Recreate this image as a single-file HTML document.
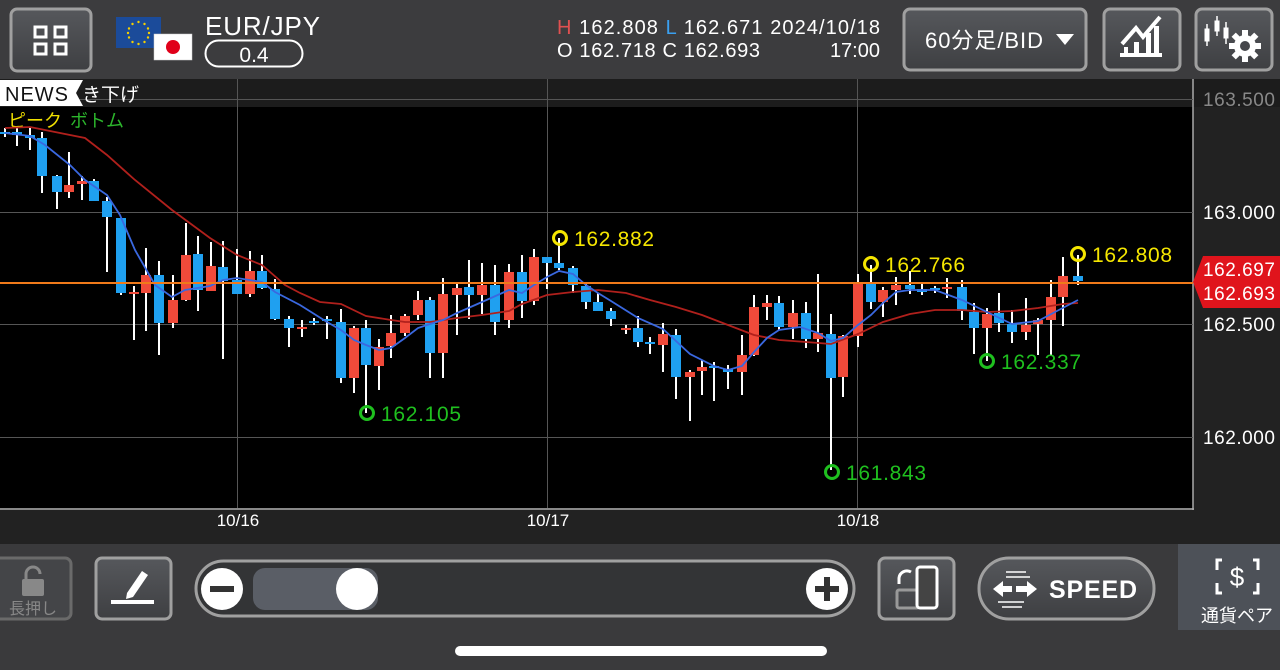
<!DOCTYPE html>
<html><head><meta charset="utf-8"><style>
html,body{margin:0;padding:0;background:#3a3a3c;width:1280px;height:670px;overflow:hidden}
svg{display:block}
text{font-family:"Liberation Sans","Noto Sans CJK JP",sans-serif}
</style></head><body>
<svg id="s" width="1280" height="670" viewBox="0 0 1280 670" xmlns="http://www.w3.org/2000/svg">
<defs>
<linearGradient id="bg1" x1="0" y1="0" x2="0" y2="1"><stop offset="0" stop-color="#56585c"/><stop offset="1" stop-color="#3e3f42"/></linearGradient>
</defs>
<rect x="0" y="0" width="1280" height="79" fill="#3c3c3e"/>
<rect x="0" y="79" width="1280" height="28" fill="#1c1c1c"/>
<rect x="0" y="107" width="1193" height="401" fill="#000"/>
<rect x="1193" y="107" width="87" height="401" fill="#222"/>
<rect x="0" y="508" width="1280" height="36" fill="#222"/>
<rect x="0" y="544" width="1280" height="126" fill="#3a3a3c"/>
<line x1="1193" y1="79" x2="1193" y2="510" stroke="#aaa" stroke-width="1.5"/>
<line x1="0" y1="509" x2="1194" y2="509" stroke="#aaa" stroke-width="1.5"/>

<g stroke="#555" stroke-width="1">
<line x1="0" y1="99.5" x2="1193" y2="99.5"/>
<line x1="0" y1="212.5" x2="1193" y2="212.5"/>
<line x1="0" y1="324.5" x2="1193" y2="324.5"/>
<line x1="0" y1="437.5" x2="1193" y2="437.5"/>
<line x1="237.5" y1="79" x2="237.5" y2="508"/>
<line x1="547.5" y1="79" x2="547.5" y2="508"/>
<line x1="857.5" y1="79" x2="857.5" y2="508"/>
</g>

<rect x="11" y="9" width="80" height="62" rx="6" fill="url(#bg1)" stroke="#a0a0a0" stroke-width="3"/>
<g fill="none" stroke="#fff" stroke-width="3">
<rect x="35" y="27" width="11" height="10"/><rect x="55" y="27" width="11" height="10"/>
<rect x="35" y="44" width="11" height="10"/><rect x="55" y="44" width="11" height="10"/>
</g>
<rect x="116" y="17" width="45" height="31" fill="#1b4b9a"/>
<g fill="#f5d000"><circle cx="138.5" cy="22" r="1.2"/><circle cx="144.5" cy="24" r="1.2"/><circle cx="148" cy="28.5" r="1.2"/><circle cx="149" cy="33" r="1.2"/><circle cx="148" cy="37.5" r="1.2"/><circle cx="144.5" cy="42" r="1.2"/><circle cx="138.5" cy="44" r="1.2"/><circle cx="132.5" cy="42" r="1.2"/><circle cx="129" cy="37.5" r="1.2"/><circle cx="128" cy="33" r="1.2"/><circle cx="129" cy="28.5" r="1.2"/><circle cx="132.5" cy="24" r="1.2"/></g>
<rect x="154" y="34" width="38" height="26" fill="#fff" stroke="#ccc" stroke-width="0.5"/>
<circle cx="173" cy="47" r="7" fill="#e0001a"/>
<text x="205" y="35" font-size="26" fill="#fff" textLength="115">EUR/JPY</text>
<rect x="205.5" y="40.5" width="97" height="26" rx="13" fill="none" stroke="#fff" stroke-width="2"/>
<text x="254" y="62" font-size="21" fill="#fff" text-anchor="middle">0.4</text>

<g font-size="20" fill="#fff">
<text x="557" y="34" textLength="323"><tspan fill="#e05050">H</tspan> 162.808 <tspan fill="#3aa0f0">L</tspan> 162.671 2024/10/18</text>
<text x="557" y="57" textLength="203">O 162.718 C 162.693</text>
<text x="880" y="57" text-anchor="end">17:00</text>
</g>
<rect x="904" y="9" width="182" height="61" rx="6" fill="url(#bg1)" stroke="#a0a0a0" stroke-width="3"/>
<text x="925" y="48" font-size="22" fill="#fff" textLength="118">60分足/BID</text>
<path d="M1056 34 L1074 34 L1065 45 Z" fill="#fff"/>
<rect x="1104" y="9" width="76" height="61" rx="6" fill="url(#bg1)" stroke="#a0a0a0" stroke-width="3"/>
<path d="M1122 44 L1136 28 L1143 37 L1160 17" stroke="#fff" stroke-width="4" fill="none"/>
<rect x="1124" y="47" width="4" height="8" fill="#fff"/><rect x="1134" y="42" width="5" height="13" fill="#fff"/><rect x="1146" y="33" width="5" height="22" fill="#fff"/><rect x="1154" y="26" width="5" height="29" fill="#fff"/>
<rect x="1120" y="53" width="42" height="4" fill="#fff"/>
<rect x="1196" y="9" width="76" height="61" rx="6" fill="url(#bg1)" stroke="#a0a0a0" stroke-width="3"/>
<g fill="#fff" stroke="#fff"><line x1="1207" y1="24" x2="1207" y2="46" stroke-width="1.5"/><rect x="1205" y="29" width="4" height="12"/>
<line x1="1217" y1="16" x2="1217" y2="36" stroke-width="1.5"/><rect x="1215" y="21" width="4" height="10"/>
<line x1="1226" y1="22" x2="1226" y2="44" stroke-width="1.5"/><rect x="1224" y="28" width="4" height="10"/></g>
<g transform="translate(1245,46)"><circle r="11" fill="#fff"/>
<g fill="#fff"><rect x="-3" y="-16" width="6" height="32"/><rect x="-3" y="-16" width="6" height="32" transform="rotate(45)"/><rect x="-3" y="-16" width="6" height="32" transform="rotate(90)"/><rect x="-3" y="-16" width="6" height="32" transform="rotate(135)"/></g>
<circle r="5" fill="#45464a"/></g>

<path d="M0 80 L83 80 L76 93 L83 106 L0 106 Z" fill="#fff"/>
<text x="5" y="101" font-size="20" fill="#111" textLength="63">NEWS</text>
<text x="82" y="101" font-size="19" fill="#fff">き下げ</text>
<text x="8" y="127" font-size="18" fill="#f0e000">ピーク</text>
<text x="70" y="127" font-size="18" fill="#2cb52c">ボトム</text>

<g id="candles"></g>

<line x1="0" y1="283" x2="1193" y2="283" stroke="#f07a1a" stroke-width="2"/>
<path d="M1193 282 L1203 256 L1280 256 L1280 308 L1203 308 Z" fill="#e0141c"/>
<g font-size="19" fill="#fff"><text x="1203" y="276" textLength="72">162.697</text><text x="1203" y="300" textLength="72">162.693</text></g>
<g font-size="19" fill="#fff"><text x="1203" y="106" fill="#888" textLength="72">163.500</text><text x="1203" y="219" textLength="72">163.000</text><text x="1203" y="331" textLength="72">162.500</text><text x="1203" y="444" textLength="72">162.000</text></g>

<g fill="none" stroke-width="3">
<circle cx="560" cy="238" r="6.5" stroke="#f5e600"/><circle cx="871" cy="264" r="6.5" stroke="#f5e600"/><circle cx="1078" cy="254" r="6.5" stroke="#f5e600"/>
<circle cx="367" cy="413" r="6.5" stroke="#1fc01f"/><circle cx="832" cy="472" r="6.5" stroke="#1fc01f"/><circle cx="987" cy="361" r="6.5" stroke="#1fc01f"/>
</g>
<g font-size="21">
<text x="574" y="246" fill="#f5e600" textLength="80">162.882</text><text x="885" y="272" fill="#f5e600" textLength="80">162.766</text><text x="1092" y="262" fill="#f5e600" textLength="80">162.808</text>
<text x="381" y="421" fill="#1fc01f" textLength="80">162.105</text><text x="846" y="480" fill="#1fc01f" textLength="80">161.843</text><text x="1001" y="369" fill="#1fc01f" textLength="80">162.337</text>
</g>

<g font-size="17" fill="#fff" text-anchor="middle"><text x="238" y="526">10/16</text><text x="548" y="526">10/17</text><text x="858" y="526">10/18</text></g>

<rect x="-10" y="558" width="81" height="61" rx="6" fill="#444548" stroke="#6a6a6a" stroke-width="3"/>
<path d="M26 580 v-6 a7 7 0 0 1 14 0" stroke="#888" stroke-width="3" fill="none"/>
<rect x="22" y="579" width="22" height="17" rx="2" fill="#888"/>
<text x="33" y="614" font-size="16" fill="#888" text-anchor="middle">長押し</text>
<rect x="96" y="558" width="75" height="61" rx="6" fill="url(#bg1)" stroke="#a0a0a0" stroke-width="3"/>
<path d="M127 593 L142 571 L148 575 L133 597 L126 599 Z" fill="#fff"/>
<rect x="111" y="600" width="43" height="4" fill="#fff"/>
<rect x="196" y="561" width="658" height="55" rx="27.5" fill="#333436" stroke="#a0a0a0" stroke-width="3"/>
<rect x="253" y="568" width="125" height="42" rx="12" fill="#5a5e66"/>
<ellipse cx="357" cy="589" rx="21" ry="21" fill="#fff"/>
<circle cx="222" cy="589" r="21" fill="#fff"/><rect x="210" y="586" width="24" height="6" fill="#333"/>
<circle cx="827" cy="589" r="21" fill="#fff"/><rect x="815" y="586" width="24" height="6" fill="#333"/><rect x="824" y="577" width="6" height="24" fill="#333"/>
<rect x="879" y="558" width="75" height="61" rx="6" fill="url(#bg1)" stroke="#a0a0a0" stroke-width="3"/>
<rect x="897" y="590" width="22" height="18" rx="2" fill="none" stroke="#999" stroke-width="3"/>
<rect x="917" y="567" width="20" height="41" rx="3" fill="#444" stroke="#fff" stroke-width="3"/>
<path d="M899 584 v-6 a8 8 0 0 1 12 -6" stroke="#fff" stroke-width="3" fill="none"/>
<rect x="979" y="558" width="175" height="61" rx="30" fill="url(#bg1)" stroke="#a0a0a0" stroke-width="3"/>
<path d="M993 589 L1003 581 L1003 586 L1012 586 L1012 592 L1003 592 L1003 597 Z M1037 589 L1027 581 L1027 586 L1016 586 L1016 592 L1027 592 L1027 597 Z" fill="#fff"/>
<g stroke="#fff" stroke-width="1.5"><line x1="1006" y1="572" x2="1026" y2="572"/><line x1="1006" y1="577" x2="1030" y2="577"/><line x1="998" y1="602" x2="1024" y2="602"/><line x1="1002" y1="607" x2="1022" y2="607"/></g>
<text x="1049" y="598" font-size="25" font-weight="bold" fill="#fff" textLength="88">SPEED</text>
<rect x="1178" y="544" width="102" height="86" fill="#4d5158"/>
<g stroke="#fff" stroke-width="3" fill="none"><path d="M1222 560 h-5 v10 M1253 560 h5 v10 M1222 593 h-5 v-10 M1253 593 h5 v-10"/></g>
<text x="1237" y="586" font-size="26" fill="#fff" text-anchor="middle">$</text>
<text x="1237" y="622" font-size="18" fill="#fff" text-anchor="middle">通貨ペア</text>
<rect x="455" y="646" width="372" height="10" rx="5" fill="#fff"/>
</svg>
<script>
var C=[
[5,'b',132,134,128,137],[17,'b',132,135,128,146],[30,'b',135,138,128,150],[42,'b',138,176,132,193],[57,'b',176,192,175,209],[69,'r',185,192,152,198],[82,'r',181,184,176,200],[94,'b',181,201,179,201],[107,'b',201,217,197,272],[121,'b',218,293,218,295],[134,'r',292,294,286,340],[146,'r',275,293,248,331],[159,'b',275,323,261,355],[173,'r',300,323,275,328],[186,'r',255,300,223,301],[198,'b',254,290,236,311],[211,'r',266,291,242,291],[223,'b',267,281,241,359],[237,'b',280,294,249,294],[250,'r',271,294,251,297],[262,'b',271,288,255,289],[275,'b',289,319,279,320],[289,'b',319,328,316,347],[302,'r',327,329,320,337],[314,'b',321,323,318,325],[327,'b',319,321,316,339],[341,'b',322,378,309,383],[354,'r',328,378,326,393],[366,'b',328,365,320,413],[379,'r',347,366,339,390],[391,'r',333,346,315,358],[405,'r',316,333,314,336],[418,'r',300,315,291,320],[430,'b',300,353,297,378],[443,'r',294,353,278,378],[457,'r',288,295,282,335],[469,'b',287,295,260,319],[482,'r',285,295,263,314],[495,'b',285,322,265,335],[509,'r',272,320,264,328],[522,'b',272,301,255,318],[534,'r',257,301,249,305],[547,'b',257,263,257,289],[559,'b',263,268,238,270],[573,'b',268,285,266,293],[586,'b',286,302,283,309],[598,'b',302,311,293,311],[611,'b',311,319,308,326],[626,'r',328,330,325,334],[638,'b',328,342,316,347],[650,'b',342,344,337,354],[663,'r',334,345,323,372],[676,'b',335,377,329,399],[690,'r',372,377,370,421],[702,'r',367,371,360,395],[714,'b',366,368,362,401],[728,'b',369,372,365,389],[742,'r',355,372,335,395],[754,'r',307,355,295,356],[767,'r',303,307,295,320],[779,'b',303,327,296,330],[793,'r',313,327,300,339],[806,'b',313,339,302,348],[818,'r',333,339,274,352],[831,'b',334,378,314,470],[843,'r',336,377,335,397],[858,'r',283,336,274,347],[871,'b',283,302,265,309],[883,'r',290,302,287,317],[896,'r',285,290,277,305],[910,'b',285,289,271,294],[922,'b',289,292,284,295],[935,'b',288,290,286,293],[947,'r',287,289,278,298],[962,'b',287,311,280,320],[974,'b',312,328,303,354],[987,'r',314,328,308,361],[999,'b',313,323,293,332],[1012,'b',324,332,310,343],[1026,'r',325,332,298,340],[1038,'r',320,324,318,355],[1051,'r',297,320,280,355],[1063,'r',276,297,257,326],[1078,'b',276,281,255,285]];
var blue=[[5,133],[30,136],[45,145],[70,165],[85,180],[107,195],[120,215],[135,250],[155,285],[172,297],[185,290],[210,286],[223,280],[237,278],[262,282],[275,292],[300,305],[327,322],[341,330],[354,340],[366,345],[379,350],[391,348],[405,338],[418,328],[430,324],[443,320],[457,313],[482,302],[509,290],[522,293],[534,285],[547,277],[559,271],[573,274],[586,285],[598,293],[611,301],[638,318],[663,329],[690,354],[714,366],[728,370],[742,366],[754,352],[767,338],[779,330],[800,327],[818,333],[831,341],[843,338],[858,325],[871,315],[883,303],[896,292],[910,290],[935,290],[962,300],[987,312],[1012,324],[1038,321],[1055,312],[1078,300]];
var red=[[5,128],[30,127],[60,133],[85,138],[107,155],[135,180],[172,210],[210,238],[237,255],[262,265],[285,285],[300,293],[320,302],[341,304],[366,316],[391,320],[405,322],[430,322],[457,318],[482,315],[509,311],[522,304],[547,295],[573,292],[598,290],[626,293],[650,300],[676,307],[702,315],[728,325],[754,335],[779,340],[806,342],[831,344],[858,334],[883,322],[910,314],[935,310],[962,310],[987,312],[1012,311],[1038,308],[1063,304],[1078,303]];
var h='';
C.forEach(function(c){var x=c[0],col=c[1]=='b'?'#1fa0f0':'#f04a3a';var t=c[2],b=c[3];if(b-t<2){b=t+2;}
h+='<line x1="'+x+'" y1="'+c[4]+'" x2="'+x+'" y2="'+c[5]+'" stroke="#fff" stroke-width="2"/>';
h+='<rect x="'+(x-5)+'" y="'+t+'" width="10" height="'+(b-t)+'" fill="'+col+'"/>';});
function pl(a,col){return '<polyline fill="none" stroke="'+col+'" stroke-width="1.8" points="'+a.map(function(p){return p.join(',')}).join(' ')+'"/>';}
h+=pl(red,'#b0201c')+pl(blue,'#3a68e0');
document.getElementById('candles').innerHTML=h;
</script>
</body></html>
